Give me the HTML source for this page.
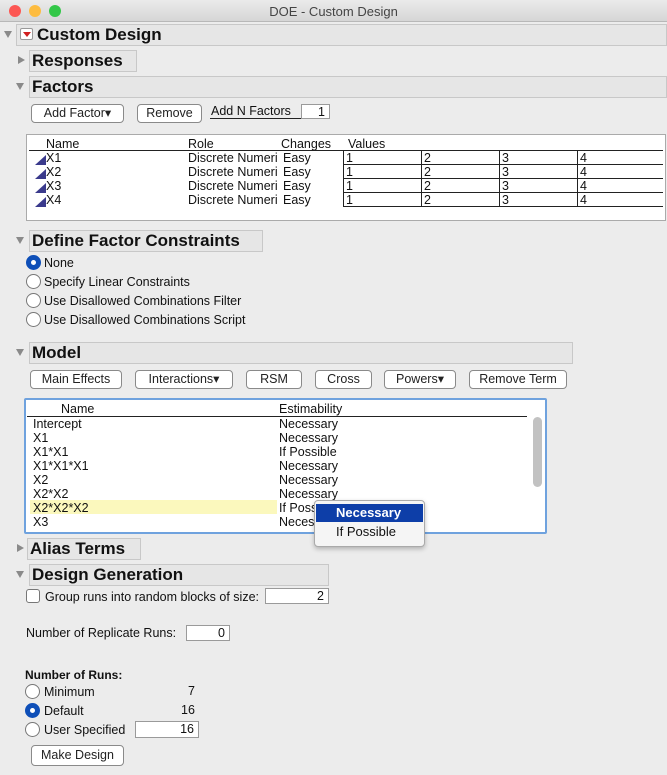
<!DOCTYPE html>
<html><head><meta charset="utf-8"><style>
*{margin:0;padding:0;box-sizing:border-box}
body{width:667px;height:775px;background:#ececec;font-family:"Liberation Sans",Arial,sans-serif;font-size:12px;color:#111;position:relative;overflow:hidden}
.a{position:absolute;white-space:nowrap}
.hdr{position:absolute;border:1px solid #c8c8c8;background:#e6e6e6;font-weight:bold;font-size:17px;padding-left:2px;line-height:20px}
.tri{position:absolute;width:0;height:0}
.td{border-left:4px solid transparent;border-right:4px solid transparent;border-top:7px solid #8a8a8a}
.tr{border-top:4px solid transparent;border-bottom:4px solid transparent;border-left:7px solid #8a8a8a}
.btn{position:absolute;border:1px solid #8a8a8a;border-radius:4px;background:#fff;height:19px;line-height:17px;text-align:center;font-size:12.5px;color:#222}
.inp{position:absolute;background:#fff;border:1px solid #9a9a9a;text-align:right;padding-right:4px;font-size:12.5px;line-height:14px}
.rad{position:absolute;width:15px;height:15px;border:1px solid #777;border-radius:50%;background:#fff}
.rad.on{background:#0e4fb8;border-color:#0e4fb8}
.rad.on:after{content:"";position:absolute;left:4px;top:4px;width:5px;height:5px;border-radius:50%;background:#fff}
.lbl{position:absolute;font-size:12.5px;white-space:nowrap;line-height:14px}
.hl{position:absolute;height:1px;background:#222}
.vl{position:absolute;width:1px;background:#222}
.fi{position:absolute;width:0;height:0;border-left:11px solid transparent;border-bottom:10px solid #3a3a8c}
</style></head><body>
<!-- title bar -->
<div class="a" style="left:0;top:0;width:667px;height:22px;background:linear-gradient(#ebebeb,#d6d6d6);border-bottom:1px solid #b8b8b8"></div>
<div class="a" style="left:9px;top:5px;width:12px;height:12px;border-radius:50%;background:#fc5753"></div>
<div class="a" style="left:29px;top:5px;width:12px;height:12px;border-radius:50%;background:#fdbc40"></div>
<div class="a" style="left:49px;top:5px;width:12px;height:12px;border-radius:50%;background:#33c748"></div>
<div class="a" style="left:0;width:667px;top:4px;text-align:center;font-size:13px;color:#444">DOE - Custom Design</div>

<div class="tri td" style="left:4px;top:31px"></div>
<div class="hdr" style="left:16px;top:24px;width:651px;height:22px;padding-left:20px">Custom Design</div>
<div class="a" style="left:20px;top:28px;width:13px;height:12px;border:1px solid #999;border-radius:2px;background:#fff"></div>
<div class="tri" style="left:23px;top:32px;border-left:4px solid transparent;border-right:4px solid transparent;border-top:5px solid #d02020"></div>

<div class="tri tr" style="left:18px;top:56px"></div>
<div class="hdr" style="left:29px;top:50px;width:108px;height:22px">Responses</div>
<div class="tri td" style="left:16px;top:83px"></div>
<div class="hdr" style="left:29px;top:76px;width:638px;height:22px">Factors</div>

<div class="btn" style="left:31px;top:104px;width:93px">Add Factor▾</div>
<div class="btn" style="left:137px;top:104px;width:65px">Remove</div>
<div class="lbl" style="left:210px;top:104px;border-bottom:1px solid #222;width:92px;padding-left:1px">Add N Factors</div>
<div class="inp" style="left:301px;top:104px;width:29px;height:15px">1</div>

<div class="a" style="left:26px;top:134px;width:640px;height:87px;background:#fff;border:1px solid #aaa"></div>
<div class="lbl" style="left:46px;top:137px">Name</div>
<div class="lbl" style="left:188px;top:137px">Role</div>
<div class="lbl" style="left:281px;top:137px">Changes</div>
<div class="lbl" style="left:348px;top:137px">Values</div>
<div class="hl" style="left:29px;top:150px;width:634px"></div>
<div class="hl" style="left:343px;top:164px;width:320px"></div>
<div class="hl" style="left:343px;top:178px;width:320px"></div>
<div class="hl" style="left:343px;top:192px;width:320px"></div>
<div class="hl" style="left:343px;top:206px;width:320px"></div>
<div class="vl" style="left:343px;top:150px;height:57px"></div>
<div class="vl" style="left:421px;top:150px;height:57px"></div>
<div class="vl" style="left:499px;top:150px;height:57px"></div>
<div class="vl" style="left:577px;top:150px;height:57px"></div>
<div class="fi" style="left:35px;top:155px"></div>
<div class="fi" style="left:35px;top:169px"></div>
<div class="fi" style="left:35px;top:183px"></div>
<div class="fi" style="left:35px;top:197px"></div>
<div class="lbl" style="left:46px;top:151px;line-height:14px">X1<br>X2<br>X3<br>X4</div>
<div class="lbl" style="left:188px;top:151px;line-height:14px">Discrete Numeri<br>Discrete Numeri<br>Discrete Numeri<br>Discrete Numeri</div>
<div class="lbl" style="left:283px;top:151px;line-height:14px">Easy<br>Easy<br>Easy<br>Easy</div>
<div class="lbl" style="left:346px;top:151px;line-height:14px">1<br>1<br>1<br>1</div>
<div class="lbl" style="left:424px;top:151px;line-height:14px">2<br>2<br>2<br>2</div>
<div class="lbl" style="left:502px;top:151px;line-height:14px">3<br>3<br>3<br>3</div>
<div class="lbl" style="left:580px;top:151px;line-height:14px">4<br>4<br>4<br>4</div>

<div class="tri td" style="left:16px;top:237px"></div>
<div class="hdr" style="left:29px;top:230px;width:234px;height:22px">Define Factor Constraints</div>
<div class="rad on" style="left:26px;top:255px"></div><div class="lbl" style="left:44px;top:256px">None</div>
<div class="rad" style="left:26px;top:274px"></div><div class="lbl" style="left:44px;top:275px">Specify Linear Constraints</div>
<div class="rad" style="left:26px;top:293px"></div><div class="lbl" style="left:44px;top:294px">Use Disallowed Combinations Filter</div>
<div class="rad" style="left:26px;top:312px"></div><div class="lbl" style="left:44px;top:313px">Use Disallowed Combinations Script</div>

<div class="tri td" style="left:16px;top:349px"></div>
<div class="hdr" style="left:29px;top:342px;width:544px;height:22px">Model</div>
<div class="btn" style="left:30px;top:370px;width:92px">Main Effects</div>
<div class="btn" style="left:135px;top:370px;width:98px">Interactions▾</div>
<div class="btn" style="left:246px;top:370px;width:56px">RSM</div>
<div class="btn" style="left:315px;top:370px;width:57px">Cross</div>
<div class="btn" style="left:384px;top:370px;width:72px">Powers▾</div>
<div class="btn" style="left:469px;top:370px;width:98px">Remove Term</div>

<div class="a" style="left:24px;top:398px;width:523px;height:136px;background:#fff;border:2px solid #6fa2de;border-radius:2px"></div>
<div class="lbl" style="left:61px;top:402px">Name</div>
<div class="lbl" style="left:279px;top:402px">Estimability</div>
<div class="hl" style="left:27px;top:416px;width:500px"></div>
<div class="a" style="left:30px;top:500px;width:247px;height:14px;background:#fbf8bd"></div>
<div class="lbl" style="left:33px;top:417px;line-height:14px">Intercept<br>X1<br>X1*X1<br>X1*X1*X1<br>X2<br>X2*X2<br>X2*X2*X2<br>X3</div>
<div class="lbl" style="left:279px;top:417px;line-height:14px">Necessary<br>Necessary<br>If Possible<br>Necessary<br>Necessary<br>Necessary<br>If Poss<br>Neces</div>
<div class="a" style="left:533px;top:417px;width:9px;height:70px;border-radius:5px;background:#c2c2c2"></div>

<div class="a" style="left:314px;top:500px;width:111px;height:47px;background:#f5f5f5;border:1px solid #aaa;border-radius:4px;box-shadow:0 2px 5px rgba(0,0,0,.25)"></div>
<div class="a" style="left:316px;top:504px;width:107px;height:18px;background:#0d3ea8"></div>
<div class="lbl" style="left:336px;top:506px;color:#fff;font-weight:bold;font-size:13px">Necessary</div>
<div class="lbl" style="left:336px;top:525px;font-size:13px">If Possible</div>

<div class="tri tr" style="left:17px;top:544px"></div>
<div class="hdr" style="left:27px;top:538px;width:114px;height:22px">Alias Terms</div>
<div class="tri td" style="left:16px;top:571px"></div>
<div class="hdr" style="left:29px;top:564px;width:300px;height:22px">Design Generation</div>

<div class="a" style="left:26px;top:589px;width:14px;height:14px;border:1px solid #777;border-radius:3px;background:#fff"></div>
<div class="lbl" style="left:45px;top:590px">Group runs into random blocks of size:</div>
<div class="inp" style="left:265px;top:588px;width:64px;height:16px">2</div>
<div class="lbl" style="left:26px;top:626px">Number of Replicate Runs:</div>
<div class="inp" style="left:186px;top:625px;width:44px;height:16px">0</div>
<div class="lbl" style="left:25px;top:668px;font-weight:bold;font-size:12px">Number of Runs:</div>
<div class="rad" style="left:25px;top:684px"></div><div class="lbl" style="left:44px;top:685px">Minimum</div><div class="lbl" style="left:188px;top:684px">7</div>
<div class="rad on" style="left:25px;top:703px"></div><div class="lbl" style="left:44px;top:704px">Default</div><div class="lbl" style="left:181px;top:703px">16</div>
<div class="rad" style="left:25px;top:722px"></div><div class="lbl" style="left:44px;top:723px">User Specified</div>
<div class="inp" style="left:135px;top:721px;width:64px;height:17px">16</div>
<div class="btn" style="left:31px;top:745px;width:93px;height:21px;line-height:19px">Make Design</div>
</body></html>
